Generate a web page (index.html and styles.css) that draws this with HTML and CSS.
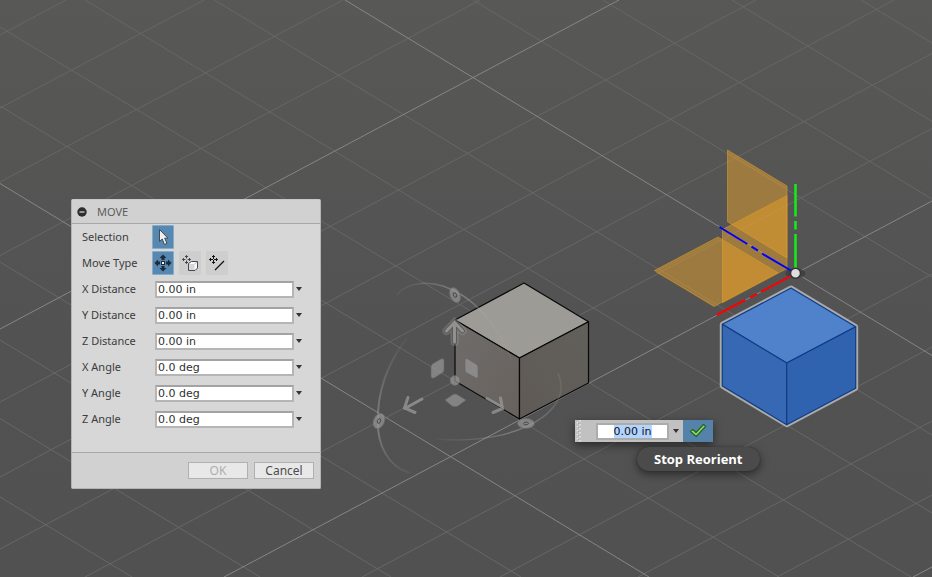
FILE: index.html
```html
<!DOCTYPE html>
<html lang="en">
<head>
<meta charset="utf-8">
<title>Move</title>
<link rel="stylesheet" href="styles.css">
</head>
<body>
<main class="viewport">
  <svg class="scene" viewBox="0 0 932 577" preserveAspectRatio="xMinYMin slice" aria-hidden="true">
    <defs>
      <linearGradient id="left-face" x1="0" y1="0" x2="1" y2="1">
        <stop offset="0" stop-color="#6f6c69"/><stop offset="1" stop-color="#68625e"/>
      </linearGradient>
      <linearGradient id="right-face" x1="0" y1="1" x2="1" y2="0">
        <stop offset="0" stop-color="#605a56"/><stop offset="1" stop-color="#61605b"/>
      </linearGradient>
      <linearGradient id="arc-a" gradientUnits="userSpaceOnUse" x1="397" y1="290" x2="512" y2="361">
        <stop offset="0" stop-color="#aaa" stop-opacity="0.1"/><stop offset="0.4" stop-color="#aaa" stop-opacity="0.5"/><stop offset="1" stop-color="#aaa" stop-opacity="0.05"/>
      </linearGradient>
      <linearGradient id="arc-b" gradientUnits="userSpaceOnUse" x1="0" y1="338" x2="0" y2="473">
        <stop offset="0" stop-color="#aaa" stop-opacity="0.05"/><stop offset="0.65" stop-color="#aaa" stop-opacity="0.5"/><stop offset="1" stop-color="#aaa" stop-opacity="0.1"/>
      </linearGradient>
      <linearGradient id="arc-c" gradientUnits="userSpaceOnUse" x1="437" y1="0" x2="562" y2="0">
        <stop offset="0" stop-color="#aaa" stop-opacity="0.05"/><stop offset="0.7" stop-color="#aaa" stop-opacity="0.5"/><stop offset="1" stop-color="#aaa" stop-opacity="0.15"/>
      </linearGradient>
    </defs>

    <!-- ground grid: minor lines -->
    <path class="grid-minor" d="M214.500 0L932 435M85 0L932 513M0 27L911 577M0 106L779 577M0 262L521 577M0 340L391 577M0 418.500L260 577M0 497L132 577M473 0L932 277M603 0L932 199M732 0L932 121.500M861 0L932 43"/>
    <path class="grid-minor" d="M0 35L66 0M0 108L204 0M0 182L343 0M0 255.500L480 0M0 402L756 0M0 477L894 0M0 549L932 53.500M85 577L932 128.500M362 577L932 274M500 577L932 347M638 577L932 421M777 577L932 495"/>
    <!-- ground grid: every fifth line -->
    <path class="grid-major" d="M345 0L932 355.500M0 183.500L649 577M0 329L619 0M224 577L932 201M913 577L932 567"/>

    <!-- original body -->
    <g class="body-edges">
      <path fill="#9c9b95" d="M524 283L588.500 321.700L519.500 358L455 320Z"/>
      <path fill="url(#left-face)" d="M455 320L519.500 358V419L455 381Z"/>
      <path fill="url(#right-face)" d="M519.500 358L588.500 321.700V383L519.500 419Z"/>
    </g>

    <!-- move manipulator -->
    <g fill="none" stroke-width="1.500">
      <path stroke="url(#arc-a)" d="M397 295C405 284 425 280 443 286C473 296 497 323 512 361"/>
      <path stroke="url(#arc-b)" stroke-width="2" d="M407 338C388 362 377 392 378 421C377 444 388 467 410 473"/>
      <path stroke="url(#arc-c)" d="M437 439C480 443 520 434 543 417C560 404 565 389 558 373"/>
    </g>
    <g class="handle">
      <ellipse cx="455" cy="295" rx="5" ry="8" transform="rotate(-24 455 295)"/>
      <ellipse cx="379" cy="421" rx="5.500" ry="8" transform="rotate(24 379 421)"/>
      <ellipse cx="526" cy="423.500" rx="8.500" ry="5"/>
      <path d="M431 367Q431 365 433 363.500L441 359Q444 358 444 360V370Q444 372 442 373L434 378Q431 379 431 376Z"/>
      <path d="M465 360Q465 358 467 358.500L476 364Q478 365 478 367V377Q478 379 476 378L467 373Q465 372 465 370Z"/>
      <path d="M445 400L453 394.500Q455 393.500 457 394.500L466 400L458 406Q455 407.500 452 406Z"/>
      <circle cx="455" cy="380.500" r="5"/>
    </g>
    <g fill="none" stroke="#4c4c4c" stroke-width="1">
      <ellipse cx="455" cy="295" rx="1.500" ry="2.300" transform="rotate(-24 455 295)"/>
      <ellipse cx="379" cy="421" rx="1.500" ry="2.300" transform="rotate(24 379 421)"/>
      <ellipse cx="526" cy="423.500" rx="2.500" ry="1.300"/>
    </g>
    <path class="arrow-glow" d="M454.500 342V324M446.500 331L454.500 322.500L462.500 331"/>
    <path class="arrow-rim" d="M454.500 342V324M446.500 331L454.500 322.500L462.500 331"/>
    <path class="arrow-up" d="M454.500 342V324M446.500 331L454.500 322.500L462.500 331"/>
    <path class="arrow" d="M422 399L405 408.500M408 397.500L404.500 408L415 412.500"/>
    <path class="arrow" d="M487 398.500L502 407M500.500 398L502.500 408.500L493 412.500"/>

    <!-- work planes -->
    <g class="plane">
      <path d="M727.500 150L787 186V258L727.500 221.700Z"/>
      <path d="M722.500 229.500L787 195.500V268.500L722.500 302.700Z"/>
      <path d="M654.500 270.500L718 237L778 272.700L714 306.500Z"/>
    </g>
    <path class="plane-inner" d="M729 153.500L785.500 187.500M658 270.500L718 239.500L773 272M656 272L713 305"/>

    <!-- moved body -->
    <path class="selected-halo" d="M791 288L855.700 326.700V388.300L786.700 424.700L722.300 386V324.300Z"/>
    <g class="selected">
      <path fill="#4f82cb" d="M791 288L855.700 326.700L786.700 363L722.300 324.300Z"/>
      <path fill="#3768b4" d="M722.300 324.300L786.700 363V424.700L722.300 386Z"/>
      <path fill="#2f62af" d="M786.700 363L855.700 326.700V388.300L786.700 424.700Z"/>
    </g>

    <!-- triad -->
    <ellipse cx="795.500" cy="273.500" rx="10" ry="5" fill="#3a3a3a" opacity="0.7"/>
    <path class="axis" stroke="#15ee15" stroke-width="2.500" d="M795.500 184V216.500M795.500 221V229.500M795.500 234V269"/>
    <path class="axis" stroke="#0000fa" stroke-width="2" d="M719.500 227L747.300 244M751.500 246.700L758 250.700M762 253.500L791 270.500"/>
    <path class="axis" stroke="#fa0000" stroke-width="2" d="M716.500 315L745.300 300M750 297.500L757 294M760.700 292L790 276.300"/>
    <circle cx="795.500" cy="273.300" r="5" fill="#dedede" stroke="#353535" stroke-width="1.500"/>
  </svg>

  <form class="panel" aria-label="Move">
    <header class="panel-head">
      <button type="button" class="collapse" aria-label="Collapse">
        <svg width="10" height="10" viewBox="0 0 10 10"><circle cx="5" cy="5" r="4.700" fill="#2d2d2d"/><path d="M2.500 5H7.500" stroke="#ddd" stroke-width="1.200"/></svg>
      </button>
      <h1 class="panel-title">MOVE</h1>
    </header>
    <div class="panel-body">
      <div class="row">
        <span class="label" id="selection">Selection</span>
        <div class="tools" role="group" aria-labelledby="selection">
          <button type="button" class="tool tool-on" aria-label="Select">
            <svg width="20" height="22" viewBox="0 0 20 22"><path d="M6.500 3.500V15.500L9.200 13L11.500 18.500L14 17.500L11.700 12.200H15Z" fill="#efefef" stroke="#3e4a55" stroke-width="1"/></svg>
          </button>
        </div>
      </div>
      <div class="row">
        <span class="label" id="move-type">Move Type</span>
        <div class="tools" role="group" aria-labelledby="move-type">
          <button type="button" class="tool tool-on" aria-label="Free move">
            <svg width="20" height="22" viewBox="0 0 20 22"><g fill="#1d2b38"><path d="M10 2.500L13.500 6H11.500V8H8.500V6H6.500Z"/><path d="M10 19.500L13.500 16H11.500V14H8.500V16H6.500Z"/><path d="M1.500 11L5 7.500V9.500H7V12.500H5V14.500Z"/><path d="M18.500 11L15 7.500V9.500H13V12.500H15V14.500Z"/></g><rect x="8.500" y="9.500" width="3" height="3" fill="#fff" stroke="#1d2b38"/></svg>
          </button>
          <button type="button" class="tool" aria-label="Translate body">
            <svg width="20" height="22" viewBox="0 0 20 22"><g stroke="#444" stroke-width="1" fill="none"><path d="M6.500 3.500V11.500M2.500 7.500H10.500M5 5L6.500 3.500L8 5M5 10L6.500 11.500L8 10M4 6L2.500 7.500L4 9M9 6L10.500 7.500L9 9"/></g><rect x="5.500" y="6.500" width="2" height="2" fill="#ddd"/><path d="M8.500 11.500L11.500 9.500H17.500V16L15 18.500H8.500Z" fill="#fafafa" stroke="#4a4a4a"/><path d="M9 12H14.500V18H9Z" fill="#d3d8e0"/><path d="M14.500 12L17 10" stroke="#bbb"/></svg>
          </button>
          <button type="button" class="tool" aria-label="Move along line">
            <svg width="20" height="22" viewBox="0 0 20 22"><g stroke="#111" stroke-width="1" fill="none"><path d="M6.500 3.500V11.500M2.500 7.500H10.500M5 5L6.500 3.500L8 5M5 10L6.500 11.500L8 10M4 6L2.500 7.500L4 9M9 6L10.500 7.500L9 9"/><path d="M8 18L17 9" stroke-width="1.200"/></g><rect x="6" y="7" width="1" height="1" fill="#ddd"/></svg>
          </button>
        </div>
      </div>
      <div class="row">
        <label class="label" for="xd">X Distance</label>
        <div class="combo"><input class="field" id="xd" value="0.00 in"><button type="button" class="more" aria-label="X Distance options"></button></div>
      </div>
      <div class="row">
        <label class="label" for="yd">Y Distance</label>
        <div class="combo"><input class="field" id="yd" value="0.00 in"><button type="button" class="more" aria-label="Y Distance options"></button></div>
      </div>
      <div class="row">
        <label class="label" for="zd">Z Distance</label>
        <div class="combo"><input class="field" id="zd" value="0.00 in"><button type="button" class="more" aria-label="Z Distance options"></button></div>
      </div>
      <div class="row">
        <label class="label" for="xa">X Angle</label>
        <div class="combo"><input class="field" id="xa" value="0.0 deg"><button type="button" class="more" aria-label="X Angle options"></button></div>
      </div>
      <div class="row">
        <label class="label" for="ya">Y Angle</label>
        <div class="combo"><input class="field" id="ya" value="0.0 deg"><button type="button" class="more" aria-label="Y Angle options"></button></div>
      </div>
      <div class="row">
        <label class="label" for="za">Z Angle</label>
        <div class="combo"><input class="field" id="za" value="0.0 deg"><button type="button" class="more" aria-label="Z Angle options"></button></div>
      </div>
    </div>
    <footer class="panel-foot">
      <button type="button" class="action" disabled>OK</button>
      <button type="button" class="action">Cancel</button>
    </footer>
  </form>

  <div class="quick">
    <svg class="grip" width="6" height="22" viewBox="0 0 6 22"><path d="M2.500 2V22M5 0V22" stroke="#e6e6e6" stroke-width="1.500" stroke-dasharray="1.500 2.500"/><path d="M3.500 3V22" stroke="#9d9d9d" stroke-dasharray="1 3"/></svg>
    <input class="quick-field" aria-label="Distance" value="0.00 in">
    <button type="button" class="more" aria-label="Distance options"></button>
    <button type="button" class="confirm" aria-label="Stop Reorient">
      <svg width="18" height="16" viewBox="0 0 18 16"><path d="M1.500 8.500L4 6.500L7 9.500L14.500 1.500L16.500 3.500L7.200 13.500Z" fill="#9fd373" stroke="#1c6a20" stroke-width="1.200" stroke-linejoin="round"/></svg>
    </button>
  </div>
  <div class="tip" role="tooltip">Stop Reorient</div>
</main>
</body>
</html>
```
FILE: styles.css
```css
* {
  box-sizing: border-box;
}

body {
  margin: 0;
  font: 11px/16px "Noto Sans", "Open Sans", sans-serif;
  color: #3c3c3c;
}

button,
input {
  margin: 0;
  padding: 0;
  border: 0;
  font: inherit;
  color: inherit;
  background: none;
}

.viewport {
  position: relative;
  min-height: 100vh;
  overflow: hidden;
  background: linear-gradient(#585857, #525252 60%, #515151);
}

.scene {
  position: absolute;
  inset: 0;
  width: 100%;
  height: 100%;
}

.grid-minor,
.grid-major {
  fill: none;
  stroke: #676767;
  stroke-width: 1;
}

.grid-major {
  stroke: #868686;
}

.body-edges {
  stroke: #080808;
  stroke-width: 1.2;
  stroke-linejoin: round;
}

.handle {
  fill: #999;
  fill-opacity: 0.7;
  stroke: #666;
  stroke-opacity: 0.6;
}

.arrow,
.arrow-up,
.arrow-rim,
.arrow-glow {
  fill: none;
  stroke: #999;
  stroke-opacity: 0.75;
  stroke-width: 3;
  stroke-linecap: round;
}

.arrow-glow {
  stroke: #aaa;
  stroke-opacity: 0.3;
  stroke-width: 8;
}

.arrow-rim {
  stroke: #5c5b5a;
  stroke-opacity: 1;
  stroke-width: 5;
}

.arrow-up {
  stroke: #92918f;
  stroke-opacity: 1;
}

.plane {
  fill: #e6a02a;
  fill-opacity: 0.5;
  stroke: #d99a2b;
  stroke-opacity: 0.6;
}

.plane-inner {
  fill: none;
  stroke: #b98c3a;
  stroke-opacity: 0.5;
}

.selected-halo {
  fill: none;
  stroke: #aaa;
  stroke-width: 5;
  stroke-linejoin: round;
}

.selected {
  stroke: #103c84;
  stroke-width: 1.2;
  stroke-linejoin: round;
}

.axis {
  fill: none;
}

.panel {
  position: absolute;
  left: 71px;
  top: 199px;
  width: 250px;
  border: 1px solid #b4b4b4;
  border-top-color: #c8c8c8;
  border-radius: 2px;
  background: #d7d7d7;
}

.panel-head {
  display: flex;
  align-items: center;
  gap: 10px;
  height: 24px;
  padding-left: 5px;
  border-bottom: 1px solid #a8a8a8;
  background: #d1d1d1;
}

.panel-title {
  margin: 0;
  font-size: 11px;
  line-height: 14px;
  font-weight: 400;
  color: #5c5c5c;
}

.collapse {
  display: flex;
}

.panel-body {
  padding-bottom: 20px;
}

.row {
  display: grid;
  grid-template-columns: 70px 1fr;
  align-items: center;
  height: 26px;
  padding-left: 10px;
}

.tools {
  display: flex;
  gap: 5px;
}

.tool {
  display: flex;
  align-items: center;
  justify-content: center;
  width: 22px;
  height: 24px;
  border-radius: 1px;
  background: #cecece;
}

.tool-on {
  border: 1px solid #86abc8;
  background: #5788b2;
}

.combo {
  display: flex;
  align-items: center;
  padding-left: 3px;
}

.field {
  width: 139px;
  height: 17px;
  padding: 0 1px;
  border: 2px solid #b5b5b5;
  border-top-color: #a3a3a3;
  background: #fff;
  font-family: "DejaVu Sans", sans-serif;
  line-height: 13px;
  color: #303030;
}

.more {
  display: flex;
  align-items: center;
  justify-content: center;
  width: 10px;
  height: 16px;
}

.more::before {
  content: "";
  border: 3px solid transparent;
  border-top: 4px solid #333;
  border-bottom: 0;
}

.panel-foot {
  display: flex;
  justify-content: flex-end;
  gap: 6px;
  padding: 9px 6px;
  border-top: 1px solid #a8a8a8;
  background: #d1d1d1;
}

.action {
  width: 60px;
  height: 17px;
  border: 1px solid #b0b0b0;
  background: #e8e8e8;
  font-size: 12px;
  line-height: 14px;
  color: #4c4c4c;
}

.action:disabled {
  color: #aeaeae;
}

.quick {
  position: absolute;
  left: 575px;
  top: 420px;
  display: flex;
  align-items: center;
  height: 22px;
  background: #c1c1c1;
  box-shadow: 0 3px 8px rgba(0, 0, 0, 0.5);
}

.quick-field {
  width: 73px;
  height: 17px;
  margin: 0 2px 0 15px;
  border: 2px solid #acacac;
  background: #fff linear-gradient(#b3d5fd, #b3d5fd) center / 38px 100% no-repeat;
  font-family: "DejaVu Sans", sans-serif;
  line-height: 13px;
  text-align: center;
  color: #101020;
}

.confirm {
  display: flex;
  align-items: center;
  justify-content: center;
  width: 30px;
  height: 22px;
  margin-left: 2px;
  background: #5582a8;
}

.tip {
  position: absolute;
  left: 637px;
  top: 447px;
  padding: 4px 17px;
  border-radius: 12px;
  background: #4b4b4b;
  box-shadow: 0 0 1px #222, 0 3px 8px rgba(0, 0, 0, 0.5);
  font-family: "Open Sans", "Noto Sans", sans-serif;
  font-size: 13px;
  font-weight: 700;
  color: #fff;
}
```
